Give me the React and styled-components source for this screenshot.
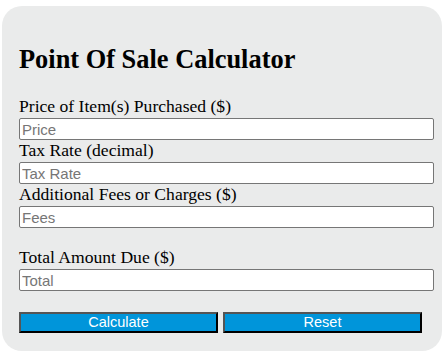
import React from "react"
import styled, { createGlobalStyle } from "styled-components"

const GlobalStyle = createGlobalStyle`
  body {
    margin: 0;
    background: #ffffff;
    font-family: "Liberation Serif", "Times New Roman", serif;
  }
`

const fields = [
  { label: "Price of Item(s) Purchased ($)", placeholder: "Price" },
  { label: "Tax Rate (decimal)", placeholder: "Tax Rate" },
  { label: "Additional Fees or Charges ($)", placeholder: "Fees" },
]

export default function App() {
  return (
    <Page>
      <GlobalStyle />
      <Card>
        <Title>Point Of Sale Calculator</Title>
        {fields.map(f => (
          <Field key={f.placeholder}>
            <Label>{f.label}</Label>
            <Input type="text" placeholder={f.placeholder} />
          </Field>
        ))}
        <Field spaced>
          <Label>Total Amount Due ($)</Label>
          <Input type="text" placeholder="Total" />
        </Field>
        <Actions>
          <Button>Calculate</Button>
          <Button>Reset</Button>
        </Actions>
      </Card>
    </Page>
  )
}

const Page = styled.div`
  padding: 6px 2px;
`

const Card = styled.div`
  box-sizing: border-box;
  width: 440px;
  height: 345px;
  padding: 38px 8px 18px 17px;
  background: #eaebeb;
  border-radius: 20px;
`

const Title = styled.h2`
  margin: 0 0 22px;
  font-size: 26.4px;
  line-height: 30px;
  font-weight: bold;
  color: #000;
`

const Field = styled.div`
  margin-top: ${props => (props.spaced ? "19px" : "0")};
`

const Label = styled.label`
  display: block;
  font-size: 17.6px;
  line-height: 21px;
  color: #000;
`

const Input = styled.input`
  display: block;
  box-sizing: border-box;
  width: 415px;
  height: 22px;
  margin: 1px 0 0;
  padding: 1px 2px;
  border: 1px solid #767676;
  border-radius: 2px;
  background: #fff;
  font-family: "Liberation Sans", Arial, sans-serif;
  font-size: 15px;
  color: #000;

  &::placeholder {
    color: #767676;
  }
`

const Actions = styled.div`
  display: flex;
  gap: 5px;
  margin-top: 21px;
`

const Button = styled.button`
  box-sizing: border-box;
  width: 199px;
  height: 21px;
  padding: 0;
  border: 2px solid;
  border-color: #555555 #000000 #000000 #555555;
  background: #0095da;
  color: #ffffff;
  font-family: "Liberation Sans", Arial, sans-serif;
  font-size: 14.5px;
  line-height: 17px;
  cursor: pointer;
`
